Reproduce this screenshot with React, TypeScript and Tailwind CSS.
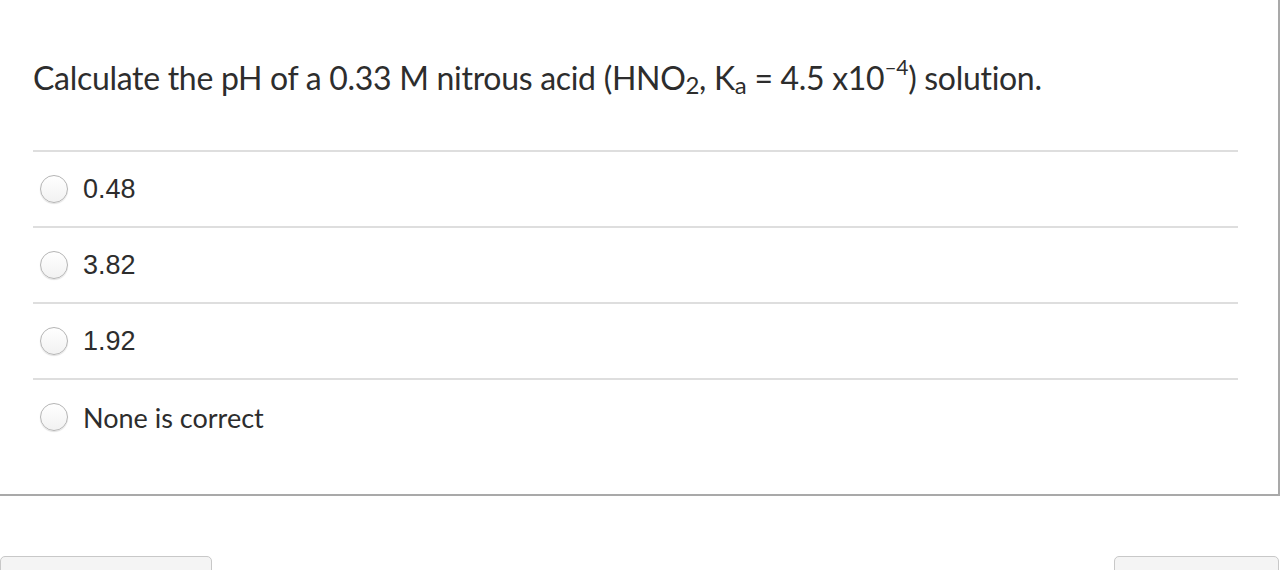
import React from 'react';

const options = [
  { id: 'a', label: '0.48', numeric: true },
  { id: 'b', label: '3.82', numeric: true },
  { id: 'c', label: '1.92', numeric: true },
  { id: 'd', label: 'None is correct', numeric: false },
];

export default function App() {
  return (
    <div className="w-[1284px] h-[570px] overflow-hidden bg-white font-['Lato','Noto_Sans',sans-serif] text-[#2d2d2d]">
      {/* Question card */}
      <div className="w-[1280px] h-[496px] border-r-2 border-b-2 border-[#a9a9a9] pl-[33px] pr-[40px]">
        <div className="h-[150px] flex items-center pt-[6px]">
          <p className="text-[32px] leading-none tracking-[-0.3px]">
            Calculate the pH of a 0.33 M nitrous acid (HNO<sub className="text-[24px] relative top-[4px]">2</sub>, K<sub className="text-[24px] relative top-[4px]">a</sub> = 4.5 x10<sup className="text-[21px] relative top-[-15px]">–4</sup>) solution.
          </p>
        </div>
        <div>
          {options.map((o) => (
            <label key={o.id} className="h-[76px] border-t-2 border-[#dedede] flex items-center">
              <span className="ml-[7px] w-[28px] h-[28px] shrink-0 rounded-full border border-[#b5b5b5] bg-gradient-to-b from-white to-[#f2f2f2] shadow-[0_1px_1px_rgba(0,0,0,0.12)]" />
              <span
                className={
                  'ml-[15px] text-[27px] leading-none ' +
                  (o.numeric ? "font-['Liberation_Sans',Arial,sans-serif]" : "font-['Lato',sans-serif]")
                }
              >
                {o.label}
              </span>
            </label>
          ))}
        </div>
      </div>

      {/* Bottom nav buttons (cut off) */}
      <div className="flex justify-between pt-[60px] pr-[5px]">
        <button className="w-[212px] h-[30px] rounded-t-[5px] border border-[#c8c8c8] bg-[#f4f4f4]" />
        <button className="w-[165px] h-[30px] rounded-t-[5px] border border-[#c8c8c8] bg-[#f4f4f4]" />
      </div>
    </div>
  );
}
